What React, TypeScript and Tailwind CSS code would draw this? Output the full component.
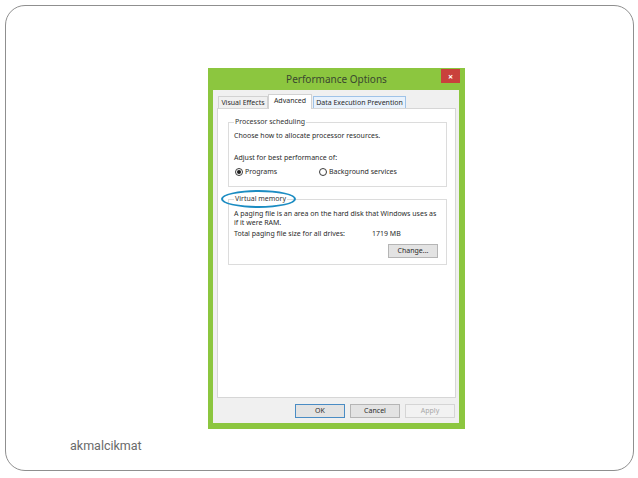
import React from "react";

const dlgFont = { fontFamily: '"Noto Sans", "Open Sans", sans-serif' };

function Radio({ checked }: { checked?: boolean }) {
  return (
    <span className="w-[8px] h-[8px] rounded-full border border-[#3a3a3a] bg-white flex items-center justify-center shrink-0">
      {checked ? <span className="w-[4px] h-[4px] rounded-full bg-[#1e1e1e]" /> : null}
    </span>
  );
}

export default function App() {
  return (
    <div className="w-[638px] h-[478px] bg-white overflow-hidden pt-[5px] pl-[5px]">
      <div className="w-[629px] h-[466px] rounded-[20px] border border-[#8f8f8f] flex flex-col">
        <div
          className="ml-[202px] mt-[62px] w-[257px] h-[361px] bg-[#8cc63f] flex flex-col"
          style={dlgFont}
        >
          {/* title bar */}
          <div className="h-[22px] grid grid-cols-[1fr_auto_1fr] items-start">
            <div />
            <div className="text-[10px] leading-[22px] text-[#3a4630]">Performance Options</div>
            <div className="flex justify-end pr-[5px] pt-[1px]">
              <div className="w-[19px] h-[14px] bg-[#c9413c] flex items-center justify-center text-white text-[9px] leading-none font-bold">
                ×
              </div>
            </div>
          </div>
          {/* inner */}
          <div className="flex-1 ml-[5px] mr-[6px] mb-[6px] bg-[#f0f0f0] flex flex-col pt-[4px] pl-[4px] pr-[3px] pb-[5px] text-[7px] text-[#2b2b2b]">
            {/* tabs */}
            <div className="flex items-end h-[14px] pl-[1px]">
              <div className="h-[12px] px-[2px] border border-b-0 border-[#d2d2d2] bg-[#f0f0f0] leading-[11px] w-[50px] text-center">
                Visual Effects
              </div>
              <div className="h-[15px] -mb-px relative z-10 border border-b-0 border-[#d2d2d2] bg-white leading-[12px] w-[44px] text-center">
                Advanced
              </div>
              <div className="h-[12px] border border-b-0 border-[#9fc3e8] bg-[#e9f2fc] leading-[11px] w-[93px] text-center ml-[1px]">
                Data Execution Prevention
              </div>
            </div>
            {/* panel */}
            <div className="flex-1 bg-white border border-[#d6d6d6] pt-[9px] pl-[10px] pr-[8px]">
              <fieldset className="border border-[#dcdcdc] pl-[5px] pr-[8px] pb-[9px]">
                <legend className="px-[1px] leading-[8px] text-[#333]">Processor scheduling</legend>
                <div className="mt-[5px] leading-[10px]">Choose how to allocate processor resources.</div>
                <div className="mt-[12px] leading-[10px]">Adjust for best performance of:</div>
                <div className="mt-[4px] h-[10px] flex items-center">
                  <div className="w-[85px] flex items-center gap-[2px] pl-[1px]">
                    <Radio checked />
                    <span>Programs</span>
                  </div>
                  <div className="flex items-center gap-[2px]">
                    <Radio />
                    <span>Background services</span>
                  </div>
                </div>
              </fieldset>
              <div className="relative mt-[8px]">
                <fieldset className="border border-[#dcdcdc] pl-[5px] pr-[8px] pb-[6px]">
                  <legend className="px-[1px] leading-[8px] text-[#333]">Virtual memory</legend>
                  <div className="mt-[6px] leading-[9px]">
                    A paging file is an area on the hard disk that Windows uses as
                    <br />
                    if it were RAM.
                  </div>
                  <div className="mt-[2px] flex leading-[9px]">
                    <span className="w-[138px]">Total paging file size for all drives:</span>
                    <span>1719 MB</span>
                  </div>
                  <div className="mt-[6px] flex justify-end">
                    <div className="w-[50px] h-[14px] bg-[#e3e3e3] border border-[#b5b5b5] leading-[12px] text-center">
                      Change...
                    </div>
                  </div>
                </fieldset>
                <div className="absolute left-[-7px] top-[-5px] w-[75px] h-[18px] rounded-[50%] border-2 border-[#1b8cc2]" />
              </div>
            </div>
            {/* buttons */}
            <div className="mt-[6px] h-[14px] flex justify-end gap-[5px] pr-[1px]">
              <div className="w-[50px] h-[14px] bg-[#e3e3e3] border border-[#4a8cc4] leading-[12px] text-center">OK</div>
              <div className="w-[50px] h-[14px] bg-[#e3e3e3] border border-[#b5b5b5] leading-[12px] text-center">Cancel</div>
              <div className="w-[50px] h-[14px] bg-[#f2f2f2] border border-[#d5d5d5] leading-[12px] text-center text-[#a8a8a8]">Apply</div>
            </div>
          </div>
        </div>
        <div
          className="ml-[64px] mt-[9px] text-[12.5px] leading-[16px] text-[#6a6a6a]"
          style={{ fontFamily: 'Roboto, "Liberation Sans", sans-serif' }}
        >
          akmalcikmat
        </div>
      </div>
    </div>
  );
}
